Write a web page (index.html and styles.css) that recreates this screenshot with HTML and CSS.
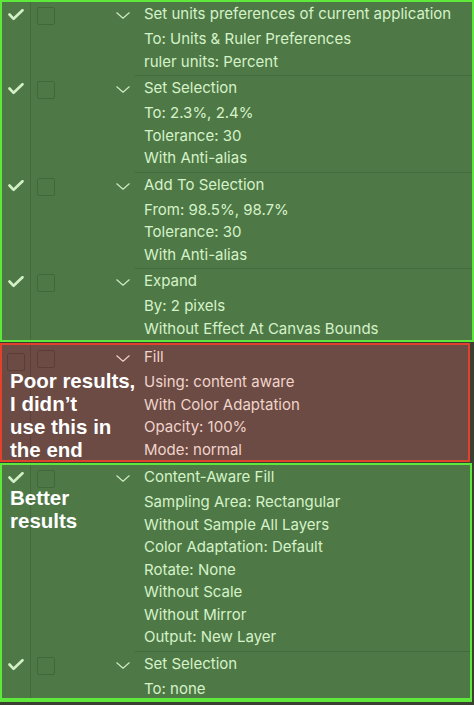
FILE: index.html
```html
<!DOCTYPE html>
<html lang="en">
<head>
<meta charset="utf-8">
<title>Actions</title>
<link rel="stylesheet" href="styles.css">
</head>
<body>
<div class="list">
  <section class="box ok first">
    <div class="row">
      <div class="c-check"><svg class="tick" viewBox="0 0 16 12" width="16" height="12"><path d="M1.5 5.5 L5.6 9.8 L14.5 1.2"/></svg></div>
      <div class="c-mid"><span class="sq"></span><svg class="chev" viewBox="0 0 14 7" width="14" height="7"><path d="M0.8 0.8 L7 6.2 L13.2 0.8"/></svg></div>
      <div class="c-text">
        <div class="title">Set units preferences of current application</div>
        <div class="subs"><div>To: Units &amp; Ruler Preferences</div><div>ruler units: Percent</div></div>
      </div>
    </div>
    <div class="row">
      <div class="c-check"><svg class="tick" viewBox="0 0 16 12" width="16" height="12"><path d="M1.5 5.5 L5.6 9.8 L14.5 1.2"/></svg></div>
      <div class="c-mid"><span class="sq"></span><svg class="chev" viewBox="0 0 14 7" width="14" height="7"><path d="M0.8 0.8 L7 6.2 L13.2 0.8"/></svg></div>
      <div class="c-text">
        <div class="title">Set Selection</div>
        <div class="subs"><div>To: 2.3%, 2.4%</div><div>Tolerance: 30</div><div>With Anti-alias</div></div>
      </div>
    </div>
    <div class="row">
      <div class="c-check"><svg class="tick" viewBox="0 0 16 12" width="16" height="12"><path d="M1.5 5.5 L5.6 9.8 L14.5 1.2"/></svg></div>
      <div class="c-mid"><span class="sq"></span><svg class="chev" viewBox="0 0 14 7" width="14" height="7"><path d="M0.8 0.8 L7 6.2 L13.2 0.8"/></svg></div>
      <div class="c-text">
        <div class="title">Add To Selection</div>
        <div class="subs"><div>From: 98.5%, 98.7%</div><div>Tolerance: 30</div><div>With Anti-alias</div></div>
      </div>
    </div>
    <div class="row">
      <div class="c-check"><svg class="tick" viewBox="0 0 16 12" width="16" height="12"><path d="M1.5 5.5 L5.6 9.8 L14.5 1.2"/></svg></div>
      <div class="c-mid"><span class="sq"></span><svg class="chev" viewBox="0 0 14 7" width="14" height="7"><path d="M0.8 0.8 L7 6.2 L13.2 0.8"/></svg></div>
      <div class="c-text">
        <div class="title">Expand</div>
        <div class="subs"><div>By: 2 pixels</div><div>Without Effect At Canvas Bounds</div></div>
      </div>
    </div>
  </section>

  <section class="box bad">
    <div class="row">
      <div class="c-check"><span class="sq sq-off"></span></div>
      <div class="c-mid"><span class="sq"></span><svg class="chev" viewBox="0 0 14 7" width="14" height="7"><path d="M0.8 0.8 L7 6.2 L13.2 0.8"/></svg></div>
      <div class="c-text">
        <div class="title">Fill</div>
        <div class="subs"><div>Using: content aware</div><div>With Color Adaptation</div><div>Opacity: 100%</div><div>Mode: normal</div></div>
      </div>
    </div>
    <p class="note note-bad">Poor results,<br>I didn’t<br>use this in<br>the end</p>
  </section>

  <section class="box ok last">
    <div class="row">
      <div class="c-check"><svg class="tick" viewBox="0 0 16 12" width="16" height="12"><path d="M1.5 5.5 L5.6 9.8 L14.5 1.2"/></svg></div>
      <div class="c-mid"><span class="sq"></span><svg class="chev" viewBox="0 0 14 7" width="14" height="7"><path d="M0.8 0.8 L7 6.2 L13.2 0.8"/></svg></div>
      <div class="c-text">
        <div class="title">Content-Aware Fill</div>
        <div class="subs"><div>Sampling Area: Rectangular</div><div>Without Sample All Layers</div><div>Color Adaptation: Default</div><div>Rotate: None</div><div>Without Scale</div><div>Without Mirror</div><div>Output: New Layer</div></div>
      </div>
    </div>
    <div class="row">
      <div class="c-check"><svg class="tick" viewBox="0 0 16 12" width="16" height="12"><path d="M1.5 5.5 L5.6 9.8 L14.5 1.2"/></svg></div>
      <div class="c-mid"><span class="sq"></span><svg class="chev" viewBox="0 0 14 7" width="14" height="7"><path d="M0.8 0.8 L7 6.2 L13.2 0.8"/></svg></div>
      <div class="c-text">
        <div class="title">Set Selection</div>
        <div class="subs"><div>To: none</div></div>
      </div>
    </div>
    <p class="note note-good">Better<br>results</p>
  </section>
</div>
</body>
</html>
```

FILE: styles.css
```css
html, body {
  margin: 0;
  padding: 0;
}
body {
  width: 474px;
  height: 705px;
  overflow: hidden;
  background: #3b3f31;
  font-family: Inter, "Liberation Sans", Arial, sans-serif;
  font-size: 15px;
}
.list {
  display: flex;
  flex-direction: column;
  gap: 1px;
}
.box {
  position: relative;
  border: 2px solid;
  overflow: hidden;
}
.ok {
  background: #4e7946;
  border-color: #5fe83c;
  color: #d6f2c9;
}
.bad {
  background: #6b4b44;
  border-color: #e2422b;
  color: #f1d4cb;
  margin-right: 4px;
  height: 115px;
}
.last {
  margin-right: 2px;
  border-bottom-width: 4px;
  height: 233px;
}
.row {
  display: grid;
  grid-template-columns: 29px 104px 1fr;
}
.c-check {
  border-right: 1px solid #436a3c;
  display: flex;
  justify-content: center;
  align-items: flex-start;
  padding-top: 7px;
}
.bad .c-check {
  border-right-color: #5e403a;
  justify-content: flex-start;
  padding-left: 5px;
  padding-top: 3px;
}
.tick path {
  fill: none;
  stroke: #d3efc7;
  stroke-width: 2.6;
  stroke-linecap: round;
  stroke-linejoin: round;
}
.c-mid {
  display: flex;
  justify-content: space-between;
  align-items: flex-start;
  padding-left: 6px;
  padding-right: 5px;
}
.sq {
  display: block;
  width: 16px;
  height: 16px;
  margin-top: 5px;
  border: 1px solid #41673a;
  border-radius: 2px;
}
.bad .sq {
  border-color: #5a3d37;
}
.chev {
  margin-top: 10px;
}
.chev path {
  fill: none;
  stroke: #cfe9c3;
  stroke-width: 1.2;
  stroke-linecap: round;
  stroke-linejoin: round;
}
.bad .chev path {
  stroke: #ecd0c8;
}
.c-text {
  padding-left: 9px;
  padding-bottom: 2px;
  border-bottom: 1px solid #446b3d;
}
.row:last-of-type .c-text {
  border-bottom: none;
  padding-bottom: 0;
}
.title {
  line-height: 24px;
  white-space: nowrap;
}
.subs {
  padding-top: 2px;
  line-height: 22.5px;
  white-space: nowrap;
}
.note {
  position: absolute;
  left: 8px;
  margin: 0;
  color: #ffffff;
  font-family: "Liberation Sans", Arial, sans-serif;
  font-weight: bold;
  font-size: 20.5px;
  line-height: 23px;
}
.note-bad {
  top: 24px;
}
.note-good {
  top: 22px;
  line-height: 22.5px;
}
```
